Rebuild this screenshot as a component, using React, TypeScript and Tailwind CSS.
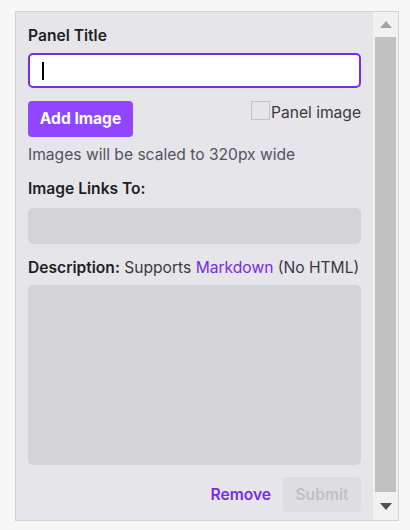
import React from "react";

export default function App() {
  return (
    <div className="w-[410px] h-[530px] bg-[#f7f7f7] pt-[11px] pl-[15px]" style={{ fontFamily: "Inter, 'Noto Sans', sans-serif" }}>
      <div className="w-[384px] h-[510px] border border-[#d3d3d8] flex">
        <div className="flex-1 bg-[#e6e5ea] pl-[12px] pr-[12px] pt-[13px] flex flex-col text-[15.6px] leading-[22px]">
          <div className="font-semibold text-[#1f1f23]">Panel Title</div>
          <div className="mt-[6px] h-[35px] rounded-[5px] border-2 border-[#772ce8] bg-white flex items-center pl-[12px]">
            <div className="w-[1.5px] h-[18px] bg-black" />
          </div>
          <div className="mt-[13px] flex justify-between items-start">
            <button className="h-[36px] w-[105px] rounded-[4px] bg-[#9147ff] text-white font-bold">Add Image</button>
            <label className="flex items-start">
              <span className="w-[19px] h-[19px] border border-[#c4c4c8] block" />
              <span className="text-[#3a3a3d] ml-[1px] mt-[1px]">Panel image</span>
            </label>
          </div>
          <div className="mt-[7px] text-[#53535f]">Images will be scaled to 320px wide</div>
          <div className="mt-[12px] font-semibold text-[#1f1f23]">Image Links To:</div>
          <div className="mt-[8px] h-[36px] rounded-[5px] bg-[#d3d3d8]" />
          <div className="mt-[13px] text-[#3a3a3d] whitespace-nowrap">
            <span className="font-semibold text-[#1f1f23]">Description:</span> Supports <span className="text-[#772ce8]">Markdown</span> (No HTML)
          </div>
          <div className="mt-[6px] h-[180px] rounded-[5px] bg-[#d3d3d8]" />
          <div className="mt-[12px] flex justify-end items-center">
            <span className="font-semibold text-[#772ce8] mr-[12px]">Remove</span>
            <button className="h-[35px] w-[78px] rounded-[4px] bg-[#dedee2] text-[#c0c0c5] font-semibold">Submit</button>
          </div>
        </div>
        <div className="w-[25px] bg-[#f1f1f1] flex flex-col items-center">
          <div className="h-[25px] flex items-center justify-center">
            <svg width="12" height="7" viewBox="0 0 12 7"><polygon points="6,0 12,7 0,7" fill="#a3a3a3" /></svg>
          </div>
          <div className="w-[21px] h-[455px] bg-[#c1c1c1]" />
          <div className="flex-1 flex items-center justify-center">
            <svg width="12" height="7" viewBox="0 0 12 7"><polygon points="0,0 12,0 6,7" fill="#505050" /></svg>
          </div>
        </div>
      </div>
    </div>
  );
}
